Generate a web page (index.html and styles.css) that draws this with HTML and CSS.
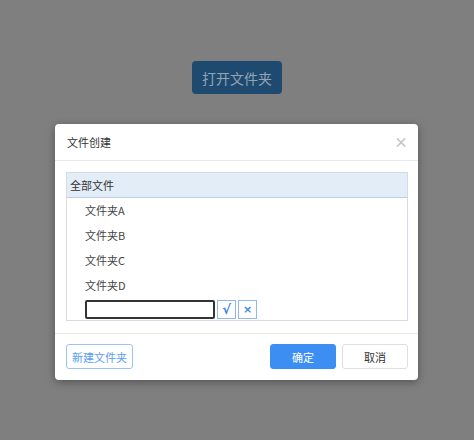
FILE: index.html
```html
<!DOCTYPE html>
<html lang="zh">
<head>
<meta charset="utf-8">
<link rel="stylesheet" href="styles.css">
</head>
<body>
<div class="page">
  <button class="open-btn">打开文件夹</button>
  <div class="modal">
    <div class="modal-header">
      <span class="modal-title">文件创建</span>
      <span class="modal-close">×</span>
    </div>
    <div class="modal-body">
      <div class="tree">
        <div class="tree-root">全部文件</div>
        <div class="tree-item">文件夹A</div>
        <div class="tree-item">文件夹B</div>
        <div class="tree-item">文件夹C</div>
        <div class="tree-item">文件夹D</div>
        <div class="tree-new">
          <input class="name-input" type="text">
          <span class="mini-btn ok">√</span>
          <span class="mini-btn cancel">×</span>
        </div>
      </div>
    </div>
    <div class="modal-footer">
      <button class="btn btn-outline">新建文件夹</button>
      <div class="spacer"></div>
      <button class="btn btn-primary">确定</button>
      <button class="btn btn-default">取消</button>
    </div>
  </div>
</div>
</body>
</html>
```

FILE: styles.css
```css
html, body {
  margin: 0;
  padding: 0;
  background: #7f7f7f;
  font-family: "Noto Sans CJK SC", "Liberation Sans", sans-serif;
}
.page {
  width: 474px;
  height: 440px;
  display: flex;
  flex-direction: column;
  align-items: center;
}
.open-btn {
  margin-top: 61px;
  width: 90px;
  height: 33px;
  border: none;
  border-radius: 4px;
  background: #1e4a6f;
  color: #93a4b5;
  font-family: inherit;
  font-size: 14px;
  padding: 0;
}
.modal {
  margin-top: 30px;
  margin-right: 1px;
  width: 363px;
  background: #fff;
  border-radius: 4px;
  box-shadow: 0 2px 8px rgba(0,0,0,0.35);
  display: flex;
  flex-direction: column;
}
.modal-header {
  height: 36px;
  border-bottom: 1px solid #e9e9e9;
  display: flex;
  align-items: center;
  justify-content: space-between;
  padding: 0 10px 0 12px;
}
.modal-title {
  font-size: 11px;
  color: #333;
}
.modal-close {
  font-size: 14px;
  font-weight: bold;
  color: #c4c4c4;
  line-height: 1;
  margin-top: -2px;
}
.modal-body {
  padding: 11px 10px 12px 11px;
  border-bottom: 1px solid #e9e9e9;
}
.tree {
  border: 1px solid #d5dbe2;
  display: flex;
  flex-direction: column;
}
.tree-root {
  height: 24px;
  line-height: 24px;
  background: #e3edf8;
  border-bottom: 1px solid #b9d0ea;
  padding-left: 3px;
  font-size: 11px;
  color: #333;
}
.tree-item {
  height: 25px;
  line-height: 25px;
  padding-left: 18px;
  font-size: 11px;
  color: #444;
}
.tree-new {
  display: flex;
  align-items: center;
  padding: 2px 0 1px 18px;
}
.name-input {
  box-sizing: border-box;
  width: 130px;
  height: 19px;
  border: 2px solid #333;
  border-radius: 2px;
  margin: 0;
  padding: 0 3px;
  background: #fff;
}
.mini-btn {
  box-sizing: border-box;
  width: 19px;
  height: 19px;
  border: 1px solid #8fb8f0;
  display: flex;
  align-items: center;
  justify-content: center;
  color: #3b86e8;
  font-family: "DejaVu Sans", sans-serif;
  font-weight: bold;
  line-height: 1;
}
.mini-btn.ok {
  margin-left: 2px;
  font-size: 13px;
}
.mini-btn.cancel {
  margin-left: 2px;
  font-size: 11px;
}
.modal-footer {
  display: flex;
  align-items: center;
  padding: 10px 10px 11px 11px;
  gap: 6px;
}
.spacer {
  flex: 1;
}
.btn {
  box-sizing: border-box;
  height: 25px;
  width: 66px;
  border-radius: 3px;
  font-family: inherit;
  font-size: 11px;
  padding: 0;
}
.btn-outline {
  width: 67px;
  border: 1px solid #9cc3f5;
  background: #fff;
  color: #5b9cf0;
}
.btn-primary {
  border: 1px solid #3d8ef2;
  background: #3d8ef2;
  color: #fff;
}
.btn-default {
  border: 1px solid #dcdfe6;
  background: #fff;
  color: #333;
}
```
